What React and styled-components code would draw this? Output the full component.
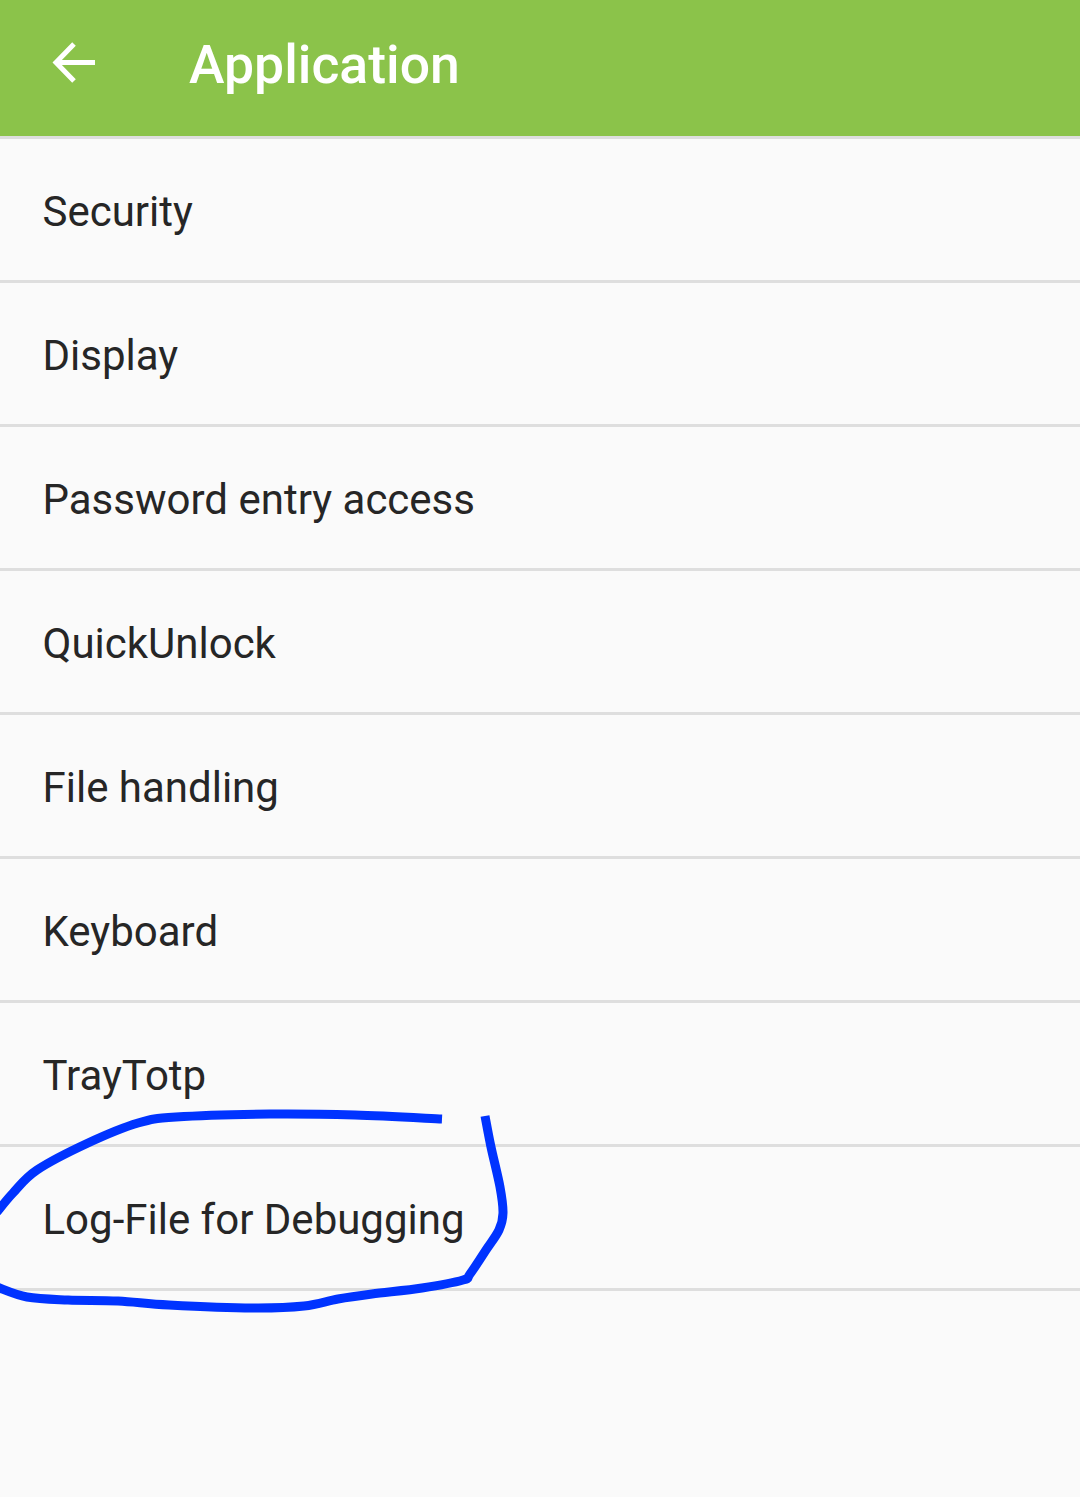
import React from 'react';
import styled, { createGlobalStyle } from 'styled-components';

const GlobalStyle = createGlobalStyle`
  html, body {
    margin: 0;
    padding: 0;
    background: #fafafa;
  }
`;

const Screen = styled.div`
  position: relative;
  width: 1080px;
  height: 1497px;
  overflow: hidden;
  background: #fafafa;
  font-family: Roboto, 'Liberation Sans', sans-serif;
`;

const Toolbar = styled.header`
  display: flex;
  align-items: center;
  height: 136px;
  padding-left: 48px;
  box-sizing: border-box;
  background: #8bc34a;
`;

const BackIcon = styled.svg`
  width: 52px;
  height: 52px;
  margin-top: -8px;
  flex-shrink: 0;
`;

const Title = styled.h1`
  margin: -8px 0 0 89px;
  font-size: 53.5px;
  font-weight: 500;
  color: #fff;
`;

const List = styled.ul`
  margin: 0;
  padding: 0;
  list-style: none;
  border-top: 3px solid #dedede;
`;

const Row = styled.li`
  display: flex;
  align-items: center;
  height: 144px;
  padding: 4px 0 0 42.5px;
  box-sizing: border-box;
  border-bottom: 3px solid #dedede;
  font-size: 42px;
  color: #262626;
`;

const Scribble = styled.svg`
  position: absolute;
  top: 0;
  left: 0;
  pointer-events: none;
`;

const items = [
  'Security',
  'Display',
  'Password entry access',
  'QuickUnlock',
  'File handling',
  'Keyboard',
  'TrayTotp',
  'Log-File for Debugging'
];

const topStroke = [
  [-3, 1212], [13, 1193], [37, 1170], [88, 1143], [138, 1123], [176, 1117],
  [270, 1114], [355, 1115], [442, 1119]
];

const sideStroke = [
  [485, 1116], [491, 1147], [500, 1187], [503, 1213], [499, 1230], [486, 1250],
  [470, 1274], [463, 1280], [422, 1288], [372, 1294], [338, 1299], [304, 1306],
  [253, 1308], [169, 1305], [118, 1301], [68, 1300], [27, 1297], [-3, 1287]
];

// catmull-rom through the hand-traced points
const smooth = pts =>
  pts.reduce((d, p, i) => {
    if (i === 0) return `M${p[0]} ${p[1]}`;
    const a = pts[i - 2] || pts[i - 1];
    const b = pts[i - 1];
    const c = pts[i + 1] || p;
    const c1 = [b[0] + (p[0] - a[0]) / 6, b[1] + (p[1] - a[1]) / 6];
    const c2 = [p[0] - (c[0] - b[0]) / 6, p[1] - (c[1] - b[1]) / 6];
    return `${d}C${c1[0]} ${c1[1]} ${c2[0]} ${c2[1]} ${p[0]} ${p[1]}`;
  }, '');

const App = () => (
  <Screen>
    <GlobalStyle />
    <Toolbar>
      <BackIcon viewBox="0 0 52 52" fill="none" stroke="#fff" strokeWidth="5">
        <path d="M47 24.5H8" />
        <path d="M26 6L8 24.5 26 43" />
      </BackIcon>
      <Title>Application</Title>
    </Toolbar>
    <List>
      {items.map(item => (
        <Row key={item}>{item}</Row>
      ))}
    </List>
    <Scribble width="1080" height="1497" fill="none" stroke="#0033ff" strokeWidth="9">
      <path d={smooth(topStroke)} />
      <path d={smooth(sideStroke)} />
    </Scribble>
  </Screen>
);

export default App;
